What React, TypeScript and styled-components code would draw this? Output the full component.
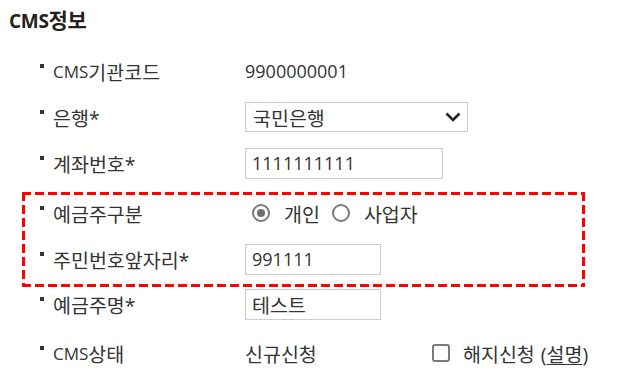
import React from "react";
import styled, { createGlobalStyle } from "styled-components";

const GlobalStyle = createGlobalStyle`
  html, body {
    margin: 0;
    padding: 0;
    background: #fff;
  }
  body {
    font-family: "Open Sans", "Noto Sans CJK KR", sans-serif;
    color: #333;
  }
`;

const Page = styled.div`
  width: 640px;
  height: 383px;
  overflow: hidden;
  background: #fff;
`;

const Title = styled.h2`
  margin: 8px 0 0 9px;
  font-size: 21px;
  line-height: 24px;
  font-weight: 700;
  color: #222;
  letter-spacing: -0.3px;
`;

// latin letters and digits render a bit smaller than the hangul
const Lat = styled.span<{ $size?: number }>`
  font-size: ${(p) => p.$size ?? 18}px;
`;

const List = styled.div`
  display: flex;
  flex-direction: column;
  padding: 15px 0 0 40px;
`;

const Row = styled.div<{ $h?: number; $mt?: number }>`
  display: grid;
  grid-template-columns: 205px 1fr;
  align-items: center;
  height: ${(p) => p.$h ?? 46}px;
  margin-top: ${(p) => p.$mt ?? 0}px;
  font-size: 19.5px;
`;

const Label = styled.div`
  display: flex;
  align-items: center;
  white-space: nowrap;
  &::before {
    content: "";
    display: inline-block;
    width: 4px;
    height: 4px;
    background: #333;
    margin-right: 9px;
    position: relative;
    top: -5px;
  }
`;

const Value = styled.div`
  display: flex;
  align-items: center;
  white-space: nowrap;
`;

const dashH = "repeating-linear-gradient(90deg, #f00 0 9px, transparent 9px 13px)";
const dashV = "repeating-linear-gradient(180deg, #f00 0 9px, transparent 9px 13px)";

const Highlight = styled.div`
  box-sizing: border-box;
  margin: 6px 0 0 -18px;
  width: 563px;
  padding: 3px 3px 10px 18px;
  background:
    ${dashH} left top / 100% 3px no-repeat,
    ${dashH} left bottom / 100% 3px no-repeat,
    ${dashV} left top / 3px 100% no-repeat,
    ${dashV} right top / 3px 100% no-repeat;
  display: flex;
  flex-direction: column;
  gap: 10px;
`;

const SelectBox = styled.div`
  box-sizing: border-box;
  width: 223px;
  height: 30px;
  border: 1px solid #ccc;
  display: flex;
  align-items: center;
  justify-content: space-between;
  padding: 0 6px 0 7px;
`;

const TextInput = styled.div<{ $w: number }>`
  box-sizing: border-box;
  width: ${(p) => p.$w}px;
  height: 31px;
  border: 1px solid #ccc;
  display: flex;
  align-items: center;
  padding: 0 6px;
`;

const RadioGroup = styled.div`
  display: flex;
  align-items: center;
  padding-left: 7px;
`;

const Radio = styled.span<{ $checked?: boolean }>`
  box-sizing: border-box;
  width: 18px;
  height: 18px;
  border-radius: 50%;
  border: 2px solid #7a7a7a;
  display: inline-flex;
  align-items: center;
  justify-content: center;
  margin-right: 14px;
  &::after {
    content: "";
    width: 8px;
    height: 8px;
    border-radius: 50%;
    background: ${(p) => (p.$checked ? "#6f6f6f" : "transparent")};
  }
`;

const RadioText = styled.span`
  margin-right: 12px;
`;

const Status = styled.span`
  width: 187px;
`;

const CheckBox = styled.span`
  box-sizing: border-box;
  width: 18px;
  height: 18px;
  border: 2px solid #7a7a7a;
  border-radius: 3px;
  margin-right: 13px;
`;

const Help = styled.span`
  margin-left: 6px;
  u {
    text-decoration: underline;
    text-underline-offset: 2px;
  }
`;

const Chevron = () => (
  <svg width="16" height="10" viewBox="0 0 16 10">
    <path d="M1.5 1.5 L8 8 L14.5 1.5" fill="none" stroke="#222" strokeWidth="2.6" />
  </svg>
);

export default function App() {
  return (
    <Page>
      <GlobalStyle />
      <Title>
        <Lat $size={19}>CMS</Lat>정보
      </Title>
      <List>
        <Row>
          <Label>
            <Lat $size={17}>CMS</Lat>기관코드
          </Label>
          <Value>
            <Lat>9900000001</Lat>
          </Value>
        </Row>
        <Row>
          <Label>은행*</Label>
          <Value>
            <SelectBox>
              <span>국민은행</span>
              <Chevron />
            </SelectBox>
          </Value>
        </Row>
        <Row>
          <Label>계좌번호*</Label>
          <Value>
            <TextInput $w={198}>
              <Lat>1111111111</Lat>
            </TextInput>
          </Value>
        </Row>
        <Highlight>
          <Row $h={36}>
            <Label>예금주구분</Label>
            <RadioGroup>
              <Radio $checked />
              <RadioText>개인</RadioText>
              <Radio />
              <RadioText>사업자</RadioText>
            </RadioGroup>
          </Row>
          <Row $h={36}>
            <Label>주민번호앞자리*</Label>
            <Value>
              <TextInput $w={136}>
                <Lat>991111</Lat>
              </TextInput>
            </Value>
          </Row>
        </Highlight>
        <Row $h={34}>
          <Label>예금주명*</Label>
          <Value>
            <TextInput $w={136}>테스트</TextInput>
          </Value>
        </Row>
        <Row $h={44} $mt={10}>
          <Label>
            <Lat $size={17}>CMS</Lat>상태
          </Label>
          <Value>
            <Status>신규신청</Status>
            <CheckBox />
            <span>해지신청</span>
            <Help>
              (<u>설명</u>)
            </Help>
          </Value>
        </Row>
      </List>
    </Page>
  );
}
